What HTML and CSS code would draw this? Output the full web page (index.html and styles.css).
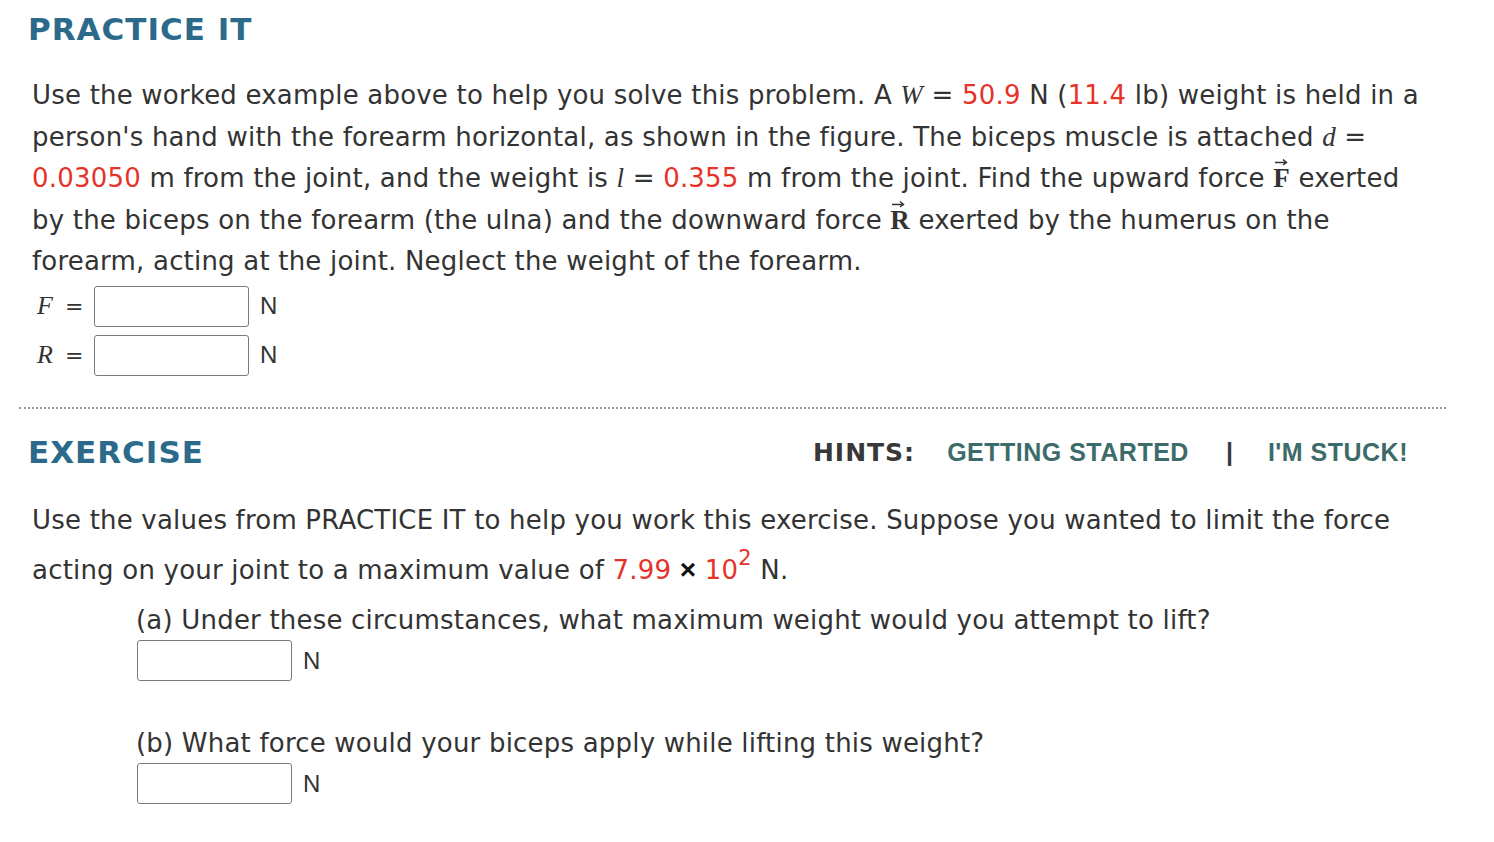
FILE: index.html
```html
<!DOCTYPE html>
<html lang="en">
<head>
<meta charset="utf-8">
<title>Practice It</title>
<link rel="stylesheet" href="styles.css">
</head>
<body>
<div class="page">
  <section class="section practice">
    <h2 class="heading">PRACTICE IT</h2>
    <p class="text">Use the worked example above to help you solve this problem. A <i class="sym">W</i> = <span class="val">50.9</span> N (<span class="val">11.4</span> lb) weight is held in a<br>person's hand with the forearm horizontal, as shown in the figure. The biceps muscle is attached <i class="sym">d</i> =<br><span class="val">0.03050</span> m from the joint, and the weight is <i class="sym">l</i> = <span class="val">0.355</span> m from the joint. Find the upward force <span class="vec">F<svg class="arrow" viewBox="0 0 14 8" width="14" height="8"><path d="M1 4.5H12M9 1.5L12.5 4.5L9 7" fill="none" stroke="#333" stroke-width="1.4"/></svg></span> exerted<br>by the biceps on the forearm (the ulna) and the downward force <span class="vec">R<svg class="arrow" viewBox="0 0 14 8" width="14" height="8"><path d="M1 4.5H12M9 1.5L12.5 4.5L9 7" fill="none" stroke="#333" stroke-width="1.4"/></svg></span> exerted by the humerus on the<br>forearm, acting at the joint. Neglect the weight of the forearm.</p>
    <div class="answers">
      <div class="answer-row">
        <span class="var-label"><i class="lbl-sym">F</i><span class="eq">=</span></span>
        <span class="box"></span>
        <span class="unit">N</span>
      </div>
      <div class="answer-row">
        <span class="var-label"><i class="lbl-sym">R</i><span class="eq">=</span></span>
        <span class="box"></span>
        <span class="unit">N</span>
      </div>
    </div>
  </section>

  <div class="divider"></div>

  <section class="section exercise">
    <div class="exercise-head">
      <h2 class="heading">EXERCISE</h2>
      <div class="hints">
        <span class="hints-label">HINTS:</span>
        <span class="hint-link">GETTING STARTED</span>
        <span class="hint-sep">|</span>
        <span class="hint-link">I'M STUCK!</span>
      </div>
    </div>
    <p class="text">Use the values from PRACTICE IT to help you work this exercise. Suppose you wanted to limit the force<br>acting on your joint to a maximum value of <span class="val">7.99</span> <span class="times">&times;</span> <span class="val">10<sup class="sup">2</sup></span> N.</p>
    <div class="part part-a">
      <div class="question">(a) Under these circumstances, what maximum weight would you attempt to lift?</div>
      <div class="answer-row">
        <span class="box"></span>
        <span class="unit">N</span>
      </div>
    </div>
    <div class="part part-b">
      <div class="question">(b) What force would your biceps apply while lifting this weight?</div>
      <div class="answer-row">
        <span class="box"></span>
        <span class="unit">N</span>
      </div>
    </div>
  </section>
</div>
</body>
</html>
```

FILE: styles.css
```css
html, body {
  margin: 0;
  padding: 0;
  background: #ffffff;
}

body {
  font-family: "DejaVu Sans", Verdana, sans-serif;
  color: #333333;
}

.page {
  padding: 0 48px 0 19px;
}

.section {
  padding-left: 11px;
}

.heading {
  margin: 0;
  font-family: "DejaVu Sans", Verdana, sans-serif;
  font-weight: bold;
  font-size: 31px;
  line-height: 40px;
  letter-spacing: 1px;
  color: #2b6a8b;
}

.practice .heading {
  margin-top: 9px;
  margin-left: -2px;
}

.exercise .heading {
  margin-left: -2px;
}

.text {
  margin: 0;
  padding-left: 2px;
  font-size: 26px;
  line-height: 1.6;
  letter-spacing: 0.2px;
  white-space: nowrap;
}

.practice .text {
  margin-top: 26px;
}

.val {
  color: #e6332a;
}

.sym {
  font-family: "Liberation Serif", "Times New Roman", serif;
  font-style: italic;
  font-size: 27px;
  line-height: 1;
}

.vec {
  position: relative;
  display: inline-block;
  font-family: "Liberation Serif", "Times New Roman", serif;
  font-weight: bold;
  font-size: 27px;
  line-height: 1;
}

.arrow {
  position: absolute;
  left: 1px;
  top: -7px;
}

.answers {
  margin-top: 3px;
  display: flex;
  flex-direction: column;
  gap: 8px;
}

.answer-row {
  display: flex;
  align-items: center;
}

.var-label {
  width: 64px;
  box-sizing: border-box;
  padding-left: 7px;
  display: flex;
  align-items: baseline;
  color: #333;
}

.lbl-sym {
  font-family: "Liberation Serif", "Times New Roman", serif;
  font-style: italic;
  font-size: 26px;
}

.eq {
  margin-left: 12px;
  font-family: "DejaVu Sans", Verdana, sans-serif;
  font-size: 22px;
}

.box {
  display: block;
  width: 155px;
  height: 41px;
  box-sizing: border-box;
  border: 1px solid #7a7a7a;
  border-radius: 3px;
  background: #fff;
}

.unit {
  margin-left: 11px;
  font-family: "Liberation Sans", Arial, sans-serif;
  font-size: 24px;
  color: #333;
}

.divider {
  margin-top: 31px;
  border-top: 2px dotted #9a9a9a;
}

.exercise-head {
  margin-top: 23px;
  display: flex;
  justify-content: space-between;
  align-items: center;
}

.hints {
  display: flex;
  align-items: baseline;
  margin-right: 38px;
  font-family: "Liberation Sans", Arial, sans-serif;
  font-weight: bold;
  font-size: 25px;
  line-height: 40px;
}

.hints-label {
  font-family: "DejaVu Sans", Verdana, sans-serif;
  font-size: 25px;
  color: #383838;
  letter-spacing: 1px;
  margin-right: 32px;
}

.hint-link {
  color: #3d6b6a;
  letter-spacing: 0.5px;
}

.hint-sep {
  color: #3a3a3a;
  margin: 0 35px 0 37px;
}

.exercise .text {
  margin-top: 27px;
}

.times {
  font-family: "Liberation Sans", Arial, sans-serif;
  font-weight: bold;
  font-size: 28px;
  line-height: 1;
  color: #111;
}

.sup {
  font-size: 21px;
  line-height: 1.6;
  vertical-align: 14px;
  margin-left: 0;
}

.part {
  padding-left: 106px;
}

.part-a {
  margin-top: 10px;
}

.part-b {
  margin-top: 43px;
}

.part .answer-row {
  padding-left: 1px;
}

.question {
  font-size: 26px;
  line-height: 39px;
  letter-spacing: 0.2px;
  white-space: nowrap;
}
```
